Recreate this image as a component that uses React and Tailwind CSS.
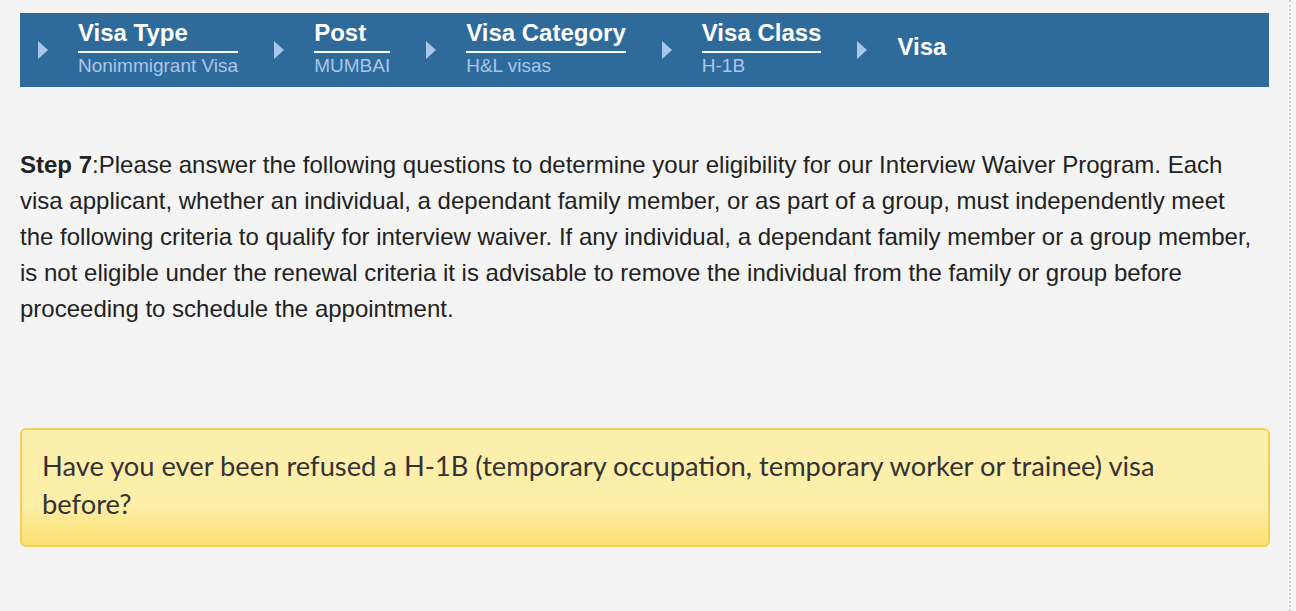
const steps = [
  { title: 'Visa Type', sub: 'Nonimmigrant Visa' },
  { title: 'Post', sub: 'MUMBAI' },
  { title: 'Visa Category', sub: 'H&L visas' },
  { title: 'Visa Class', sub: 'H-1B' },
  { title: 'Visa' },
];

function Arrow() {
  return (
    <svg width="10" height="18" viewBox="0 0 10 18" className="shrink-0">
      <path d="M0 0 L10 9 L0 18 Z" fill="#a9c6ea" />
    </svg>
  );
}

export default function App() {
  return (
    <div className="min-h-[611px] bg-[#f4f4f4]">
      <div className="w-[1291px] min-h-[611px] border-r-2 border-dotted border-[#cfcfcf] pt-[13px] px-5">
        {/* breadcrumb */}
        <div className="h-[74px] bg-[#2e6b9b] flex items-center pl-[18px] font-['Liberation_Sans',Arial,sans-serif]">
          {steps.map((s) => (
            <div key={s.title} className="flex items-center mr-[36px]">
              <Arrow />
              <div className="ml-[30px]">
                {s.sub ? (
                  <div className="flex flex-col">
                    <div className="text-[24px] leading-[28px] font-bold text-white border-b-2 border-white pb-[4px] mt-[-4px]">
                      {s.title}
                    </div>
                    <div className="text-[19px] leading-[22px] text-[#a9c6ea] pt-[2px]">{s.sub}</div>
                  </div>
                ) : (
                  <div className="text-[24px] leading-[28px] font-bold text-white mb-[6px]">{s.title}</div>
                )}
              </div>
            </div>
          ))}
        </div>

        {/* intro */}
        <p className="mt-[60px] w-[1240px] text-[24px] leading-[36px] text-[#222] font-['Liberation_Sans',Arial,sans-serif]">
          <b>Step 7</b>:Please answer the following questions to determine your eligibility for our Interview Waiver Program. Each visa applicant, whether an individual, a dependant family member, or as part of a group, must independently meet the following criteria to qualify for interview waiver. If any individual, a dependant family member or a group member, is not eligible under the renewal criteria it is advisable to remove the individual from the family or group before proceeding to schedule the appointment.
        </p>

        {/* question */}
        <div className="mt-[101px] w-[1250px] rounded-[6px] border-2 border-[#f5cf55] bg-[linear-gradient(to_bottom,#fdf0ae_0%,#fdeea8_65%,#fbe071_100%)] px-[20px] pt-[17px] pb-[22px]">
          <p className="w-[1160px] text-[27.3px] leading-[38px] text-[#333] font-['Lato',sans-serif]">
            Have you ever been refused a H-1B (temporary occupation, temporary worker or trainee) visa before?
          </p>
        </div>
      </div>
    </div>
  );
}
